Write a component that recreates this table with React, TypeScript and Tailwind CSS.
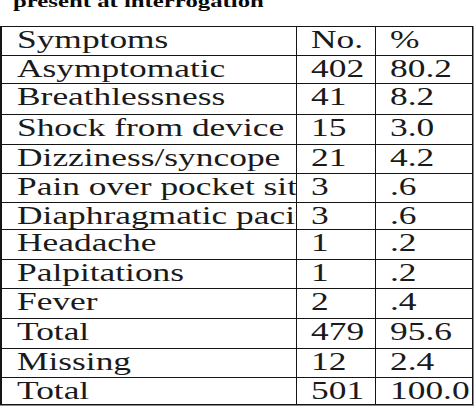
import React from "react";

const rows: { label: string; no: string; pct: string; h: string }[] = [
  { label: "Symptoms", no: "No.", pct: "%", h: "h-[29px]" },
  { label: "Asymptomatic", no: "402", pct: "80.2", h: "h-[28px]" },
  { label: "Breathlessness", no: "41", pct: "8.2", h: "h-[31px]" },
  { label: "Shock from device", no: "15", pct: "3.0", h: "h-[30px]" },
  { label: "Dizziness/syncope", no: "21", pct: "4.2", h: "h-[29px]" },
  { label: "Pain over pocket site", no: "3", pct: ".6", h: "h-[29px]" },
  { label: "Diaphragmatic pacing", no: "3", pct: ".6", h: "h-[27px]" },
  { label: "Headache", no: "1", pct: ".2", h: "h-[30px]" },
  { label: "Palpitations", no: "1", pct: ".2", h: "h-[29px]" },
  { label: "Fever", no: "2", pct: ".4", h: "h-[30px]" },
  { label: "Total", no: "479", pct: "95.6", h: "h-[30px]" },
  { label: "Missing", no: "12", pct: "2.4", h: "h-[29px]" },
  { label: "Total", no: "501", pct: "100.0", h: "h-[28px] border-b" },
];

function Stretch({ children }: { children: React.ReactNode }) {
  return <span className="inline-block origin-left scale-x-[1.415]">{children}</span>;
}

export default function App() {
  return (
    <div
      className="w-[474px] h-[406px] bg-white overflow-hidden text-[#1a1a1a]"
      style={{ fontFamily: '"Liberation Serif", "Times New Roman", serif' }}
    >
      <div className="h-[26px] overflow-hidden">
        <div className="mt-[-8px] pl-[13px] text-[17.5px] leading-[18px] font-bold whitespace-nowrap text-[#0a0a0a]">
          <Stretch>present at interrogation</Stretch>
        </div>
      </div>
      <div className="w-[474px] border-r border-b border-[#8a8a8a]">
        <div className="w-[473px] border-l-2 border-r border-[#151515] flex flex-col">
          {rows.map((r, i) => (
            <div
              key={i}
              className={`flex border-t border-[#151515] text-[25px] leading-[25px] ${r.h}`}
            >
              <div className="w-[295px] shrink-0 border-r border-[#151515] pl-[15px] overflow-hidden whitespace-nowrap">
                <Stretch>{r.label}</Stretch>
              </div>
              <div className="w-[79px] shrink-0 border-r border-[#151515] pl-[14px] overflow-hidden whitespace-nowrap">
                <Stretch>{r.no}</Stretch>
              </div>
              <div className="flex-1 pl-[14px] overflow-hidden whitespace-nowrap">
                <Stretch>{r.pct}</Stretch>
              </div>
            </div>
          ))}
        </div>
      </div>
    </div>
  );
}
